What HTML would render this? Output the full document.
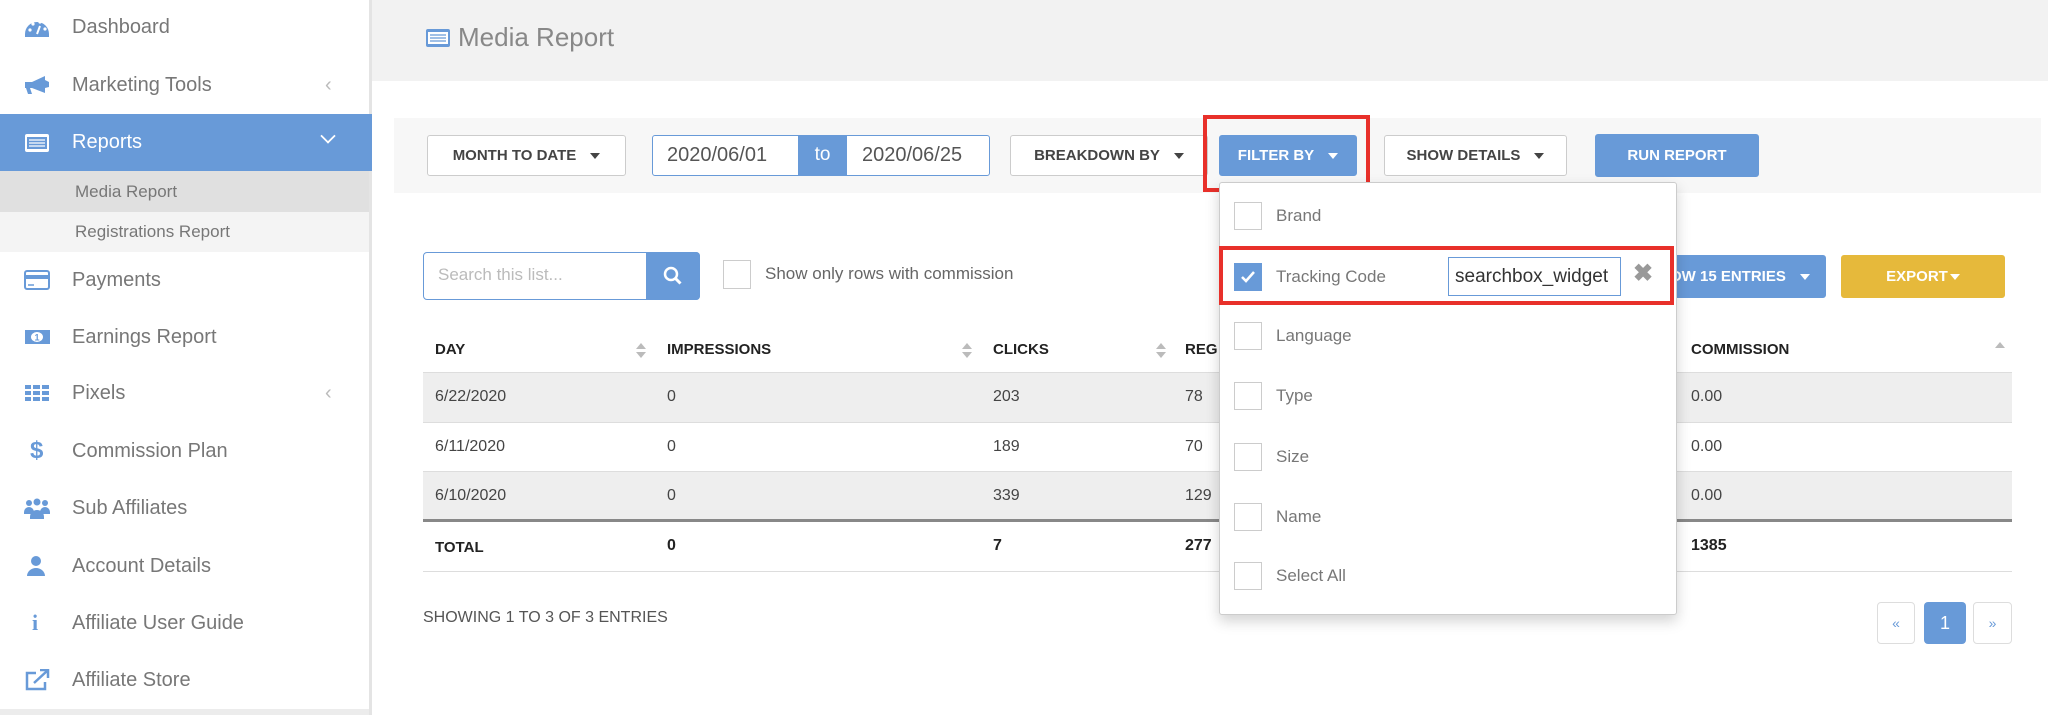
<!DOCTYPE html>
<html><head><meta charset="utf-8"><style>
*{box-sizing:border-box;margin:0;padding:0}
body{width:2048px;height:715px;overflow:hidden;background:#fff;font-family:"Liberation Sans",sans-serif;position:relative;color:#555}
.abs{position:absolute}
#side{left:0;top:0;width:372px;height:715px;background:#fff;border-right:3px solid #e4e4e4}
.si{position:absolute;left:0;width:372px;height:44px;display:flex;align-items:center;font-size:20px;color:#777}
.si .ic{position:absolute;left:24px;width:26px;height:22px;top:11px}
.si .tx{position:absolute;left:72px}
.sub{position:absolute;left:0;width:369px;font-size:17px;color:#777;padding-left:75px;display:flex;align-items:center}
.btn{position:absolute;top:135px;height:41px;border:1px solid #ccc;border-radius:3px;background:#fff;font-size:15px;font-weight:bold;color:#444;display:flex;align-items:center;justify-content:center}
.caret{display:inline-block;width:0;height:0;border-left:5px solid transparent;border-right:5px solid transparent;border-top:6px solid currentColor;margin-left:14px}
.blue{background:#689ad8;border-color:#689ad8;color:#fff}
th,td{text-align:left}
.row{position:absolute;left:423px;width:1589px;font-size:16px;color:#444}
.cb{position:absolute;width:28px;height:28px;border:1px solid #ccc;background:#fff}
.dl{position:absolute;left:1276px;font-size:17px;color:#777}
.sort{position:absolute;width:0;height:0;border-left:5px solid transparent;border-right:5px solid transparent}
</style></head><body>
<div id="side" class="abs">
 <div class="si" style="top:5px"><svg class="ic" viewBox="0 0 26 22"><path d="M1 18a12 12 0 0 1 24 0v3H1z" fill="#689ad8"/><circle cx="6" cy="14" r="1.6" fill="#fff"/><circle cx="9" cy="8" r="1.6" fill="#fff"/><circle cx="16" cy="6" r="1.6" fill="#fff"/><circle cx="21" cy="13" r="1.6" fill="#fff"/><path d="M13 18l3-8" stroke="#fff" stroke-width="2"/></svg><span class="tx">Dashboard</span></div>
 <div class="si" style="top:63px"><svg class="ic" viewBox="0 0 26 22"><path d="M1 8h7l13-6v17L8 14H6l2 6H4L2 14H1z" fill="#689ad8"/><path d="M21 6l4 2v5l-4 1" fill="#689ad8"/></svg><span class="tx">Marketing Tools</span><span class="abs" style="left:325px;color:#bbb;font-size:20px">&lsaquo;</span></div>
 <div class="si" style="top:114px;height:57px;background:#689ad8;color:#fff"><svg class="ic" style="top:18px" viewBox="0 0 26 22"><rect x="1" y="2" width="24" height="18" rx="2" fill="#fff"/><rect x="3" y="5" width="20" height="12" fill="#689ad8"/><path d="M5 8h16M5 11h16M5 14h16" stroke="#fff" stroke-width="1.3"/></svg><span class="tx">Reports</span><span class="abs" style="left:322px;top:16px;width:12px;height:12px;border-right:2px solid #fff;border-bottom:2px solid #fff;transform:rotate(45deg) scale(.9)"></span></div>
 <div class="sub" style="top:171px;height:41px;background:#e0e0e0">Media Report</div>
 <div class="sub" style="top:212px;height:40px;background:#f4f4f4">Registrations Report</div>
 <div class="si" style="top:258px"><svg class="ic" viewBox="0 0 26 22"><rect x="1" y="2" width="24" height="18" rx="2" fill="none" stroke="#689ad8" stroke-width="2"/><rect x="1" y="6" width="24" height="4" fill="#689ad8"/><path d="M4 16h6" stroke="#689ad8" stroke-width="1.5"/></svg><span class="tx">Payments</span></div>
 <div class="si" style="top:315px"><svg class="ic" viewBox="0 0 26 22"><rect x="1" y="4" width="25" height="14" fill="#689ad8"/><ellipse cx="13" cy="11" rx="6" ry="5" fill="#fff"/><text x="13" y="14.5" font-size="9" text-anchor="middle" fill="#689ad8" font-family="Liberation Sans" font-weight="bold">1</text></svg><span class="tx">Earnings Report</span></div>
 <div class="si" style="top:371px"><svg class="ic" viewBox="0 0 26 22"><g fill="#689ad8"><rect x="1" y="3" width="6" height="4"/><rect x="9" y="3" width="7" height="4"/><rect x="18" y="3" width="7" height="4"/><rect x="1" y="9" width="6" height="4"/><rect x="9" y="9" width="7" height="4"/><rect x="18" y="9" width="7" height="4"/><rect x="1" y="15" width="6" height="4"/><rect x="9" y="15" width="7" height="4"/><rect x="18" y="15" width="7" height="4"/></g></svg><span class="tx">Pixels</span><span class="abs" style="left:325px;color:#bbb;font-size:20px">&lsaquo;</span></div>
 <div class="si" style="top:429px"><span class="abs" style="left:30px;color:#689ad8;font-weight:bold;font-size:24px">$</span><span class="tx">Commission Plan</span></div>
 <div class="si" style="top:486px"><svg class="ic" viewBox="0 0 26 22"><g fill="#689ad8"><circle cx="5" cy="6" r="3"/><circle cx="13" cy="5" r="3.5"/><circle cx="21" cy="6" r="3"/><path d="M0 15a5 5 0 0 1 10 0v2H0zM16 15a5 5 0 0 1 10 0v2H16z"/><path d="M6 20a7 7 0 0 1 14 0v2H6z"/></g></svg><span class="tx">Sub Affiliates</span></div>
 <div class="si" style="top:544px"><svg class="ic" viewBox="0 0 26 22"><g fill="#689ad8"><circle cx="12" cy="6" r="5"/><path d="M3 21a9 8 0 0 1 18 0z"/></g></svg><span class="tx">Account Details</span></div>
 <div class="si" style="top:601px"><span class="abs" style="left:32px;color:#689ad8;font-weight:bold;font-size:22px;font-family:'Liberation Serif',serif">i</span><span class="tx">Affiliate User Guide</span></div>
 <div class="si" style="top:658px"><svg class="ic" viewBox="0 0 26 22"><path d="M12 4H3v16h18v-7" fill="none" stroke="#689ad8" stroke-width="2.5"/><path d="M10 14L23 2M16 1h8v8" fill="none" stroke="#689ad8" stroke-width="2.5"/></svg><span class="tx">Affiliate Store</span></div>
 <div class="abs" style="left:0;top:709px;width:369px;height:6px;background:#ececec"></div>
</div>

<div class="abs" style="left:372px;top:0;width:1676px;height:81px;background:#f2f2f2"></div>
<svg class="abs" style="left:424px;top:27px" width="28" height="22" viewBox="0 0 26 22"><rect x="1" y="2" width="24" height="18" rx="2" fill="#689ad8"/><rect x="3" y="5" width="20" height="12" fill="#fff"/><path d="M5 8h16M5 11h16M5 14h16" stroke="#689ad8" stroke-width="1.3"/></svg>
<div class="abs" style="left:458px;top:22px;font-size:26px;color:#888">Media Report</div>

<div class="abs" style="left:394px;top:118px;width:1647px;height:75px;background:#f7f7f7"></div>
<div class="btn" style="left:427px;width:199px">MONTH TO DATE<span class="caret"></span></div>
<div class="abs" style="left:652px;top:135px;width:338px;height:41px;border:1px solid #689ad8;border-radius:3px;background:#fff;font-size:20px;color:#555">
 <span class="abs" style="left:14px;top:8px">2020/06/01</span>
 <span class="abs" style="left:145px;top:0;width:49px;height:39px;background:#689ad8;color:#fff;text-align:center;line-height:38px;font-size:19px">to</span>
 <span class="abs" style="left:209px;top:8px">2020/06/25</span>
</div>
<div class="btn" style="left:1010px;width:198px">BREAKDOWN BY<span class="caret"></span></div>
<div class="btn blue" style="left:1219px;width:138px">FILTER BY<span class="caret"></span></div>
<div class="abs" style="left:1203px;top:115px;width:167px;height:77px;border:4px solid #e8302a"></div>
<div class="btn" style="left:1384px;width:183px">SHOW DETAILS<span class="caret"></span></div>
<div class="btn blue" style="left:1595px;width:164px;top:134px;height:43px">RUN REPORT</div>

<div class="abs" style="left:423px;top:252px;width:277px;height:48px;border:1px solid #689ad8;border-radius:4px;background:#fff"></div>
<div class="abs" style="left:438px;top:265px;font-size:17px;color:#bbb">Search this list...</div>
<div class="abs" style="left:646px;top:252px;width:54px;height:48px;background:#689ad8;border-radius:0 4px 4px 0"></div>
<svg class="abs" style="left:663px;top:266px" width="20" height="20" viewBox="0 0 20 20"><circle cx="8" cy="8" r="6" fill="none" stroke="#fff" stroke-width="2.5"/><path d="M12.5 12.5l5 5" stroke="#fff" stroke-width="3"/></svg>
<div class="abs" style="left:723px;top:260px;width:28px;height:29px;border:1px solid #ccc"></div>
<div class="abs" style="left:765px;top:264px;font-size:17px;color:#666">Show only rows with commission</div>

<div class="btn blue" style="left:1633px;top:255px;width:193px;height:43px">SHOW 15 ENTRIES<span class="caret"></span></div>
<div class="btn" style="left:1841px;top:255px;width:164px;height:43px;background:#e6b93b;border-color:#e6b93b;color:#fff">EXPORT<span class="caret" style="margin-left:2px"></span></div>

<div class="row" style="top:326px;height:46px;font-weight:bold;font-size:15px;color:#222">
 <span class="abs" style="left:12px;top:15px">DAY</span>
 <span class="abs" style="left:244px;top:15px">IMPRESSIONS</span>
 <span class="abs" style="left:570px;top:15px">CLICKS</span>
 <span class="abs" style="left:762px;top:15px">REG</span>
 <span class="abs" style="left:1268px;top:15px">COMMISSION</span>
</div>
<div class="sort" style="left:636px;top:343px;border-bottom:6px solid #bbb"></div><div class="sort" style="left:636px;top:352px;border-top:6px solid #bbb"></div>
<div class="sort" style="left:962px;top:343px;border-bottom:6px solid #bbb"></div><div class="sort" style="left:962px;top:352px;border-top:6px solid #bbb"></div>
<div class="sort" style="left:1156px;top:343px;border-bottom:6px solid #bbb"></div><div class="sort" style="left:1156px;top:352px;border-top:6px solid #bbb"></div>
<div class="sort" style="left:1995px;top:342px;border-bottom:6px solid #bbb"></div>

<div class="row" style="top:372px;height:50px;background:#eee;border-top:1px solid #ddd"><span class="abs" style="left:12px;top:15px">6/22/2020</span><span class="abs" style="left:244px;top:15px">0</span><span class="abs" style="left:570px;top:15px">203</span><span class="abs" style="left:762px;top:15px">78</span><span class="abs" style="left:1268px;top:15px">0.00</span></div>
<div class="row" style="top:422px;height:49px;border-top:1px solid #ddd"><span class="abs" style="left:12px;top:15px">6/11/2020</span><span class="abs" style="left:244px;top:15px">0</span><span class="abs" style="left:570px;top:15px">189</span><span class="abs" style="left:762px;top:15px">70</span><span class="abs" style="left:1268px;top:15px">0.00</span></div>
<div class="row" style="top:471px;height:51px;background:#eee;border-top:1px solid #ddd;border-bottom:3px solid #888"><span class="abs" style="left:12px;top:15px">6/10/2020</span><span class="abs" style="left:244px;top:15px">0</span><span class="abs" style="left:570px;top:15px">339</span><span class="abs" style="left:762px;top:15px">129</span><span class="abs" style="left:1268px;top:15px">0.00</span></div>
<div class="row" style="top:522px;height:50px;border-bottom:1px solid #ddd;font-weight:bold;color:#222"><span class="abs" style="left:12px;top:17px;font-size:15px">TOTAL</span><span class="abs" style="left:244px;top:15px">0</span><span class="abs" style="left:570px;top:15px">7</span><span class="abs" style="left:762px;top:15px">277</span><span class="abs" style="left:1268px;top:15px">1385</span></div>

<div class="abs" style="left:423px;top:609px;font-size:16px;color:#555">SHOWING 1 TO 3 OF 3 ENTRIES</div>
<div class="abs" style="left:1877px;top:602px;width:38px;height:42px;border:1px solid #ddd;border-radius:4px;color:#689ad8;text-align:center;line-height:40px;font-size:14px">«</div>
<div class="abs" style="left:1924px;top:602px;width:42px;height:42px;background:#689ad8;border-radius:4px;color:#fff;text-align:center;line-height:42px;font-size:18px">1</div>
<div class="abs" style="left:1973px;top:602px;width:39px;height:42px;border:1px solid #ddd;border-radius:4px;color:#689ad8;text-align:center;line-height:40px;font-size:14px">»</div>

<div class="abs" style="left:1219px;top:182px;width:458px;height:433px;background:#fff;border:1px solid #ccc;border-radius:3px;box-shadow:0 6px 14px rgba(0,0,0,.18)"></div>
<div class="cb" style="left:1234px;top:202px"></div><div class="dl" style="top:206px">Brand</div>
<div class="cb" style="left:1234px;top:263px;background:#689ad8;border-color:#689ad8"></div>
<svg class="abs" style="left:1240px;top:270px" width="16" height="14" viewBox="0 0 16 14"><path d="M2 7l4 4 8-9" fill="none" stroke="#fff" stroke-width="2.5"/></svg>
<div class="dl" style="top:267px">Tracking Code</div>
<div class="abs" style="left:1448px;top:257px;width:173px;height:39px;border:1px solid #689ad8;font-size:19px;color:#333;padding:8px 0 0 6px">searchbox_widget</div>
<div class="abs" style="left:1633px;top:259px;font-size:24px;color:#999;font-weight:bold">✖</div>
<div class="abs" style="left:1219px;top:246px;width:455px;height:59px;border:4px solid #e8302a"></div>
<div class="cb" style="left:1234px;top:322px"></div><div class="dl" style="top:326px">Language</div>
<div class="cb" style="left:1234px;top:382px"></div><div class="dl" style="top:386px">Type</div>
<div class="cb" style="left:1234px;top:443px"></div><div class="dl" style="top:447px">Size</div>
<div class="cb" style="left:1234px;top:503px"></div><div class="dl" style="top:507px">Name</div>
<div class="cb" style="left:1234px;top:562px"></div><div class="dl" style="top:566px">Select All</div>
</body></html>
